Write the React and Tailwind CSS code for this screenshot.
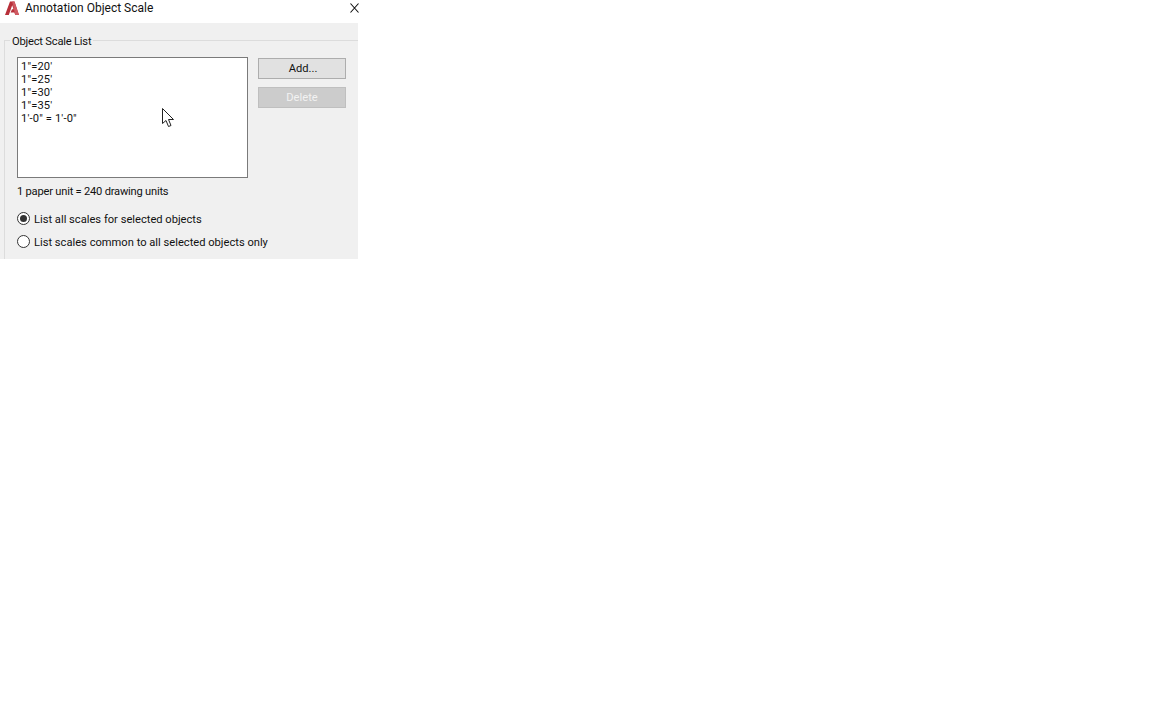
const scales = [`1"=20'`, `1"=25'`, `1"=30'`, `1"=35'`, `1'-0" = 1'-0"`];

function Radio({ checked, label }) {
  return (
    <label className="flex items-center gap-[4px] h-[14px]">
      <span className="w-[13px] h-[13px] rounded-full border border-[#333333] bg-white flex items-center justify-center shrink-0 mt-[-1px]">
        {checked && <span className="w-[7px] h-[7px] rounded-full bg-[#333333]" />}
      </span>
      <span>{label}</span>
    </label>
  );
}

export default function App() {
  return (
    <div className="relative w-[358px] h-[259px] font-['Roboto',sans-serif] text-[11.15px] leading-[13px] text-[#111111]">
      {/* Title bar */}
      <div className="h-[23px] flex items-start bg-white">
        <svg className="ml-[5px] mt-[1px] w-[14px] h-[14px]" viewBox="0 0 14 14">
          <path d="M5 0.5h4.5L14 14H10.2L9.4 11.4H5.6L7 8.2H8.5L7.2 4.2 3.8 14H0Z" fill="#b8303a" />
          <path d="M7.2 0.5h2.3L14 14H10.2Z" fill="#cf5a62" />
        </svg>
        <span className="ml-[6px] mt-[1px] text-[12px] leading-[15px]">Annotation Object Scale</span>
        <svg className="ml-auto mt-[3px] mr-[-1px] w-[9px] h-[10px]" viewBox="0 0 9 10">
          <path d="M0.5 0.5L8.5 9.5M8.5 0.5L0.5 9.5" stroke="#111111" strokeWidth="1.1" fill="none" />
        </svg>
      </div>

      {/* Dialog body */}
      <div className="h-[236px] bg-[#f0f0f0] pl-[4px] pt-[10px]">
        <fieldset className="h-[226px] border-l border-t border-[#dcdcdc]">
          <legend className="ml-[5px] px-[2px] pt-[2px] leading-[13px] tracking-[-0.2px]">Object Scale List</legend>
          <div className="pl-[12px]">
            <div className="flex gap-[10px] pt-[9px]">
              <div className="w-[231px] h-[121px] border border-[#7a7a7a] bg-white pl-[3px] pt-[2px] tracking-[0.15px]">
                {scales.map((s) => (
                  <div key={s} className="h-[13px]">{s}</div>
                ))}
              </div>
              <div className="flex flex-col gap-[8px] pt-[1px]">
                <button className="w-[88px] h-[21px] border border-[#adadad] bg-[#e1e1e1] pl-[2px]">Add...</button>
                <button disabled className="w-[88px] h-[21px] border border-[#bfbfbf] bg-[#cccccc] text-[#f2f2f2]">Delete</button>
              </div>
            </div>
            <div className="mt-[7px] tracking-[-0.22px]">1 paper unit = 240 drawing units</div>
            <div className="flex flex-col gap-[9px] mt-[14px]">
              <Radio checked label="List all scales for selected objects" />
              <Radio label="List scales common to all selected objects only" />
            </div>
          </div>
        </fieldset>
      </div>

      {/* Mouse pointer */}
      <svg className="absolute left-[162px] top-[108px] w-[13px] h-[20px]" viewBox="0 0 13 20">
        <path d="M0.5 0.5V15.5L4 12.5L6.5 18.5L9 17.5L6.5 11.5H11.5Z" fill="white" stroke="#222222" strokeWidth="1" />
      </svg>
    </div>
  );
}
